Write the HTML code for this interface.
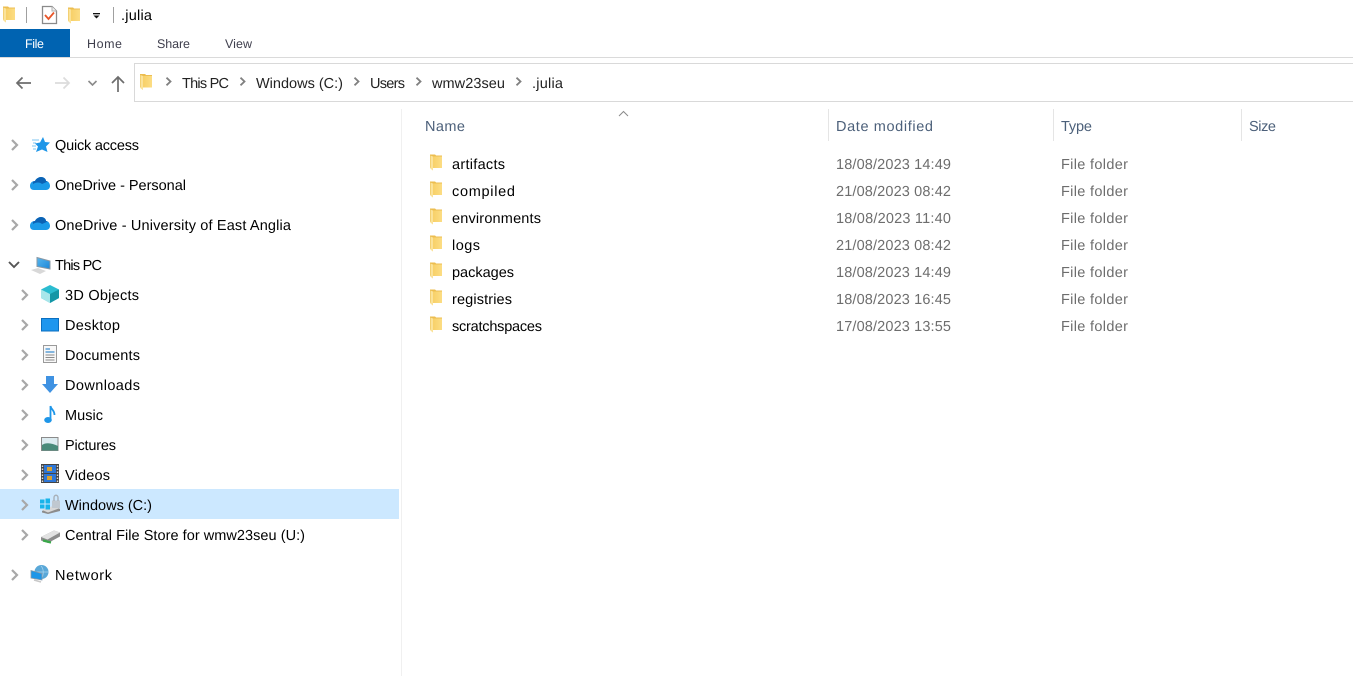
<!DOCTYPE html>
<html><head><meta charset="utf-8"><title>.julia</title>
<style>
html,body{margin:0;padding:0;background:#fff;width:1353px;height:676px;overflow:hidden}
svg{display:block}
text{font-family:"Liberation Sans",sans-serif;font-size:14.5px;fill:#000;text-rendering:geometricPrecision}
.h{fill:#4c607a}
.g{fill:#6d6d6d}
.r{fill:#222}
.t{font-size:12.5px;fill:#3f3f4d}
</style></head><body>
<svg width="1353" height="676" viewBox="0 0 1353 676" xmlns="http://www.w3.org/2000/svg">
<defs>
<linearGradient id="fg" x1="0" x2="1" y1="0" y2="0"><stop offset="0" stop-color="#f6cc5f"/><stop offset="1" stop-color="#fcdd84"/></linearGradient>
<linearGradient id="pc" x1="0" x2="1" y1="0" y2="1"><stop offset="0" stop-color="#58b7ee"/><stop offset="1" stop-color="#1c86d8"/></linearGradient>
<g id="folder">
<path d="M0 0.5 H5 L6 1.5 H12 V14 H3 V16.5 L0.5 14.5 L0 13.5Z" fill="url(#fg)"/>
<path d="M0 0.5 H5 L6 1.5 H12 V2.5 H3 V14 L0 13.5Z" fill="#e8b84a" opacity=".8"/>
<path d="M0.5 1.5 L3 2.5 V16.5 L0.5 14.5Z" fill="#fbe39a"/>
</g>
<path id="chev" d="M-3 -5 L2 0 L-3 5" fill="none" stroke="#a8a8a8" stroke-width="2.2"/>
<path id="bc" d="M-2.5 -3.8 L1.5 0 L-2.5 3.8" fill="none" stroke="#808080" stroke-width="1.8"/>
<g id="cloud">
<path d="M0 9 C0 6 2 4 5 4 C6 1.5 9 0 11 0 C14 0 16 2 16 4 C18 4 20 6 20 9 C20 11.5 18 13 16 13 H4 C1.5 13 0 11.5 0 9Z" fill="#1b9ae8"/>
<path d="M3 4.6 C4 4 5 4 5 4 C6 1.5 9 0 11 0 C14 0 16 2 16 4 C17 4.2 16.8 4.3 17.5 4.6 L12 7 C10 5 6 5 3 7Z" fill="#0b62b4"/>
</g>
</defs>

<!-- title bar -->
<use href="#folder" x="3" y="6"/>
<rect x="26" y="7" width="1" height="16" fill="#a0a0a0"/>
<path d="M42.5 6.5 H52 L56.5 11 V23.5 H42.5Z" fill="#fff" stroke="#8a8a8a" stroke-width="1.3"/>
<path d="M52 6.5 V11 H56.5" fill="#eee" stroke="#b0b0b0"/>
<path d="M45 15 L48.5 19 L54 12.5" fill="none" stroke="#e8562a" stroke-width="1.8"/>
<use href="#folder" x="68" y="7"/>
<rect x="93" y="13" width="7" height="1.3" fill="#111"/>
<path d="M93.5 15.5 H99.5 L96.5 18.5Z" fill="#111"/>
<rect x="113" y="7" width="1" height="16" fill="#a0a0a0"/>
<text x="121" y="20" textLength="31">.julia</text>

<!-- ribbon -->
<rect x="0" y="29" width="70" height="28.5" fill="#0063b1"/>
<text x="25" y="48" textLength="19" class="t" style="fill:#fff">File</text>
<text x="87" y="48" textLength="35" class="t">Home</text>
<text x="157" y="48" textLength="33" class="t">Share</text>
<text x="225" y="48" textLength="27" class="t">View</text>
<rect x="0" y="57" width="1353" height="1" fill="#dadada"/>

<!-- nav buttons -->
<path d="M31 83 H17 M22.5 77.5 L17 83 L22.5 88.5" fill="none" stroke="#6d6d6d" stroke-width="1.7"/>
<path d="M55 83 H69 M63.5 77.5 L69 83 L63.5 88.5" fill="none" stroke="#dcdcdc" stroke-width="1.7"/>
<path d="M88.5 81 L92.5 85 L96.5 81" fill="none" stroke="#8a8a8a" stroke-width="1.6"/>
<path d="M118 92 V77 M112 83 L118 77 L124 83" fill="none" stroke="#6d6d6d" stroke-width="1.7"/>

<!-- address bar -->
<path d="M134.5 101.5 V63.5 H1353" fill="none" stroke="#d9d9d9"/>
<rect x="134" y="101" width="1219" height="1" fill="#d9d9d9"/>
<use href="#folder" x="140" y="73.5"/>
<use href="#bc" x="169" y="81.5"/>
<text x="182" y="88" textLength="47" class="r">This PC</text>
<use href="#bc" x="243" y="81.5"/>
<text x="256" y="88" textLength="87" class="r">Windows (C:)</text>
<use href="#bc" x="357" y="81.5"/>
<text x="370" y="88" textLength="35" class="r">Users</text>
<use href="#bc" x="419" y="81.5"/>
<text x="432" y="88" textLength="73" class="r">wmw23seu</text>
<use href="#bc" x="519" y="81.5"/>
<text x="532" y="88" textLength="31" class="r">.julia</text>

<!-- pane divider -->
<rect x="401" y="109" width="1" height="567" fill="#f0f0f0"/>

<!-- selected row -->
<rect x="0" y="489" width="399" height="30" fill="#cce8ff"/>

<!-- nav tree -->
<use href="#chev" x="15" y="145"/>
<path d="M43 137 L45 142 L50 142.5 L46 146.5 L47.5 152 L42 149.5 L36 152 L38 146.5 L35 143.5 L40 142.5Z" fill="#1e96e8"/>
<path d="M32 140 H39 M33 143 H36 M32 146 H36 M33 149 H36" stroke="#7cc4f2" stroke-width="1"/>
<text x="55" y="150" textLength="84">Quick access</text>

<use href="#chev" x="15" y="185"/>
<use href="#cloud" x="30" y="177"/>
<text x="55" y="190" textLength="131">OneDrive - Personal</text>

<use href="#chev" x="15" y="225"/>
<use href="#cloud" x="30" y="217"/>
<text x="55" y="230" textLength="236">OneDrive - University of East Anglia</text>

<path d="M9 262 L14 267 L19 262" fill="none" stroke="#555" stroke-width="1.9"/>
<path d="M37 257.5 L50 261 V269 L37 266.5Z" fill="url(#pc)" stroke="#8a98a4" stroke-width="1"/>
<path d="M31 270 L38 268 L46 271 L40 274Z" fill="#d8d8d8"/>
<text x="55" y="270" textLength="47">This PC</text>

<use href="#chev" x="25" y="295"/>
<path d="M50 285 L59 289.5 V298 L50 303 L41 298 V289.5Z" fill="#2bbcd0"/>
<path d="M50 294 L59 289.5 V298 L50 303Z" fill="#1496a6"/>
<path d="M50 294 L41 289.5 V298 L50 303Z" fill="#a8e6ea"/>
<text x="65" y="300" textLength="74">3D Objects</text>

<use href="#chev" x="25" y="325"/>
<rect x="41.5" y="318.5" width="17" height="12.5" fill="#1e96ee" stroke="#0b6fc0"/>
<text x="65" y="330" textLength="55">Desktop</text>

<use href="#chev" x="25" y="355"/>
<rect x="43.5" y="345.5" width="13" height="17" fill="#f8f8f8" stroke="#9a9a9a"/>
<path d="M45.5 349 H50 M45.5 352 H54.5" stroke="#3d8ed0" stroke-width="1.2"/>
<path d="M45.5 355 H54.5 M45.5 357.5 H54.5 M45.5 360 H54.5" stroke="#8a8a8a" stroke-width="1"/>
<text x="65" y="360" textLength="75">Documents</text>

<use href="#chev" x="25" y="385"/>
<path d="M46 376 H54 V384 H58 L50 393 L42 384 H46Z" fill="#3f92e2"/>
<text x="65" y="390" textLength="75">Downloads</text>

<use href="#chev" x="25" y="415"/>
<ellipse cx="48" cy="420" rx="3.8" ry="3" fill="#1e96e8"/>
<path d="M50.5 420 V406 C51 409.5 54.5 410 54.5 415" fill="none" stroke="#1e96e8" stroke-width="1.8"/>
<text x="65" y="420" textLength="38">Music</text>

<use href="#chev" x="25" y="445"/>
<rect x="41.5" y="437.5" width="16.5" height="13" fill="#dcebf0" stroke="#8a8a8a"/>
<path d="M42 445 C46 442 52 443 58 446 V450.5 H42Z" fill="#4a8a7a"/>
<text x="65" y="450" textLength="51">Pictures</text>

<use href="#chev" x="25" y="475"/>
<rect x="41" y="464" width="18" height="19" fill="#444"/>
<path d="M42.5 465.5 V482 M57.5 465.5 V482" stroke="#ddd" stroke-width="1.4" stroke-dasharray="1.5 1.5"/>
<rect x="44" y="465" width="12" height="8" fill="#2d76d6"/>
<rect x="44" y="474" width="12" height="8" fill="#2d76d6"/>
<rect x="47" y="467" width="5" height="4" fill="#d8a030"/>
<rect x="47" y="476" width="5" height="4" fill="#d8a030"/>
<text x="65" y="480" textLength="45">Videos</text>

<use href="#chev" x="25" y="505"/>
<path d="M42 511 L54 506 L60 509 V511 L48 514 L42 512.5Z" fill="#8c8c8c"/>
<path d="M42 510 L54 505.5 L60 508 L48 512.5Z" fill="#d8d8d8"/>
<rect x="52" y="500.5" width="8" height="7.5" fill="#c0c8d0"/>
<path d="M54 501 V497.5 C54 494.5 58 494.5 58 497.5 V501" fill="none" stroke="#a8b0b8" stroke-width="1.4"/>
<path d="M40 499.5 H44.5 V503.5 H40Z M45.5 498.5 H50 V503.5 H45.5Z M40 504.5 H44.5 V508.5 H40Z M45.5 504.5 H50 V509.5 H45.5Z" fill="#18b4ea"/>
<text x="65" y="510" textLength="87">Windows (C:)</text>

<use href="#chev" x="25" y="535"/>
<path d="M41 537 L54 530.5 L60 532.5 V536.5 L48 543 L41 540.5Z" fill="#8c8c8c"/>
<path d="M41 537 L54 530.5 L60 532.5 L47.5 539.5Z" fill="#e2e2e2"/>
<path d="M43 540.5 L51 542.5" stroke="#3aa84a" stroke-width="2.2"/>
<text x="65" y="540" textLength="240">Central File Store for wmw23seu (U:)</text>

<use href="#chev" x="15" y="575"/>
<circle cx="41.5" cy="572" r="7" fill="#5aa8d8"/>
<path d="M41 566 C44 569 44 575 41 579 M35 572 H48" stroke="#a8d4ee" stroke-width=".8" fill="none"/>
<path d="M31 570.5 L42 573.5 V580 L31 578Z" fill="#1e96e8" stroke="#8a9aa8" stroke-width=".8"/>
<path d="M34 580 L41 582" stroke="#c8c8c8" stroke-width="1.6"/>
<text x="55" y="580" textLength="57">Network</text>

<!-- column headers -->
<path d="M619 116 L623.5 111.5 L628 116" fill="none" stroke="#8a8a8a" stroke-width="1"/>
<text x="425" y="131" textLength="40" class="h">Name</text>
<rect x="828" y="109" width="1" height="32" fill="#e5e5e5"/>
<text x="836" y="131" textLength="97" class="h">Date modified</text>
<rect x="1053" y="109" width="1" height="32" fill="#e5e5e5"/>
<text x="1061" y="131" textLength="31" class="h">Type</text>
<rect x="1241" y="109" width="1" height="32" fill="#e5e5e5"/>
<text x="1249" y="131" textLength="27" class="h">Size</text>

<!-- files -->
<use href="#folder" x="430" y="154"/>
<text x="452" y="169" textLength="53">artifacts</text>
<text x="836" y="169" textLength="115" class="g">18/08/2023 14:49</text>
<text x="1061" y="169" textLength="67" class="g">File folder</text>

<use href="#folder" x="430" y="181"/>
<text x="452" y="196" textLength="63">compiled</text>
<text x="836" y="196" textLength="115" class="g">21/08/2023 08:42</text>
<text x="1061" y="196" textLength="67" class="g">File folder</text>

<use href="#folder" x="430" y="208"/>
<text x="452" y="223" textLength="89">environments</text>
<text x="836" y="223" textLength="115" class="g">18/08/2023 11:40</text>
<text x="1061" y="223" textLength="67" class="g">File folder</text>

<use href="#folder" x="430" y="235"/>
<text x="452" y="250" textLength="28">logs</text>
<text x="836" y="250" textLength="115" class="g">21/08/2023 08:42</text>
<text x="1061" y="250" textLength="67" class="g">File folder</text>

<use href="#folder" x="430" y="262"/>
<text x="452" y="277" textLength="62">packages</text>
<text x="836" y="277" textLength="115" class="g">18/08/2023 14:49</text>
<text x="1061" y="277" textLength="67" class="g">File folder</text>

<use href="#folder" x="430" y="289"/>
<text x="452" y="304" textLength="60">registries</text>
<text x="836" y="304" textLength="115" class="g">18/08/2023 16:45</text>
<text x="1061" y="304" textLength="67" class="g">File folder</text>

<use href="#folder" x="430" y="316"/>
<text x="452" y="331" textLength="90">scratchspaces</text>
<text x="836" y="331" textLength="115" class="g">17/08/2023 13:55</text>
<text x="1061" y="331" textLength="67" class="g">File folder</text>
</svg>
</body></html>
